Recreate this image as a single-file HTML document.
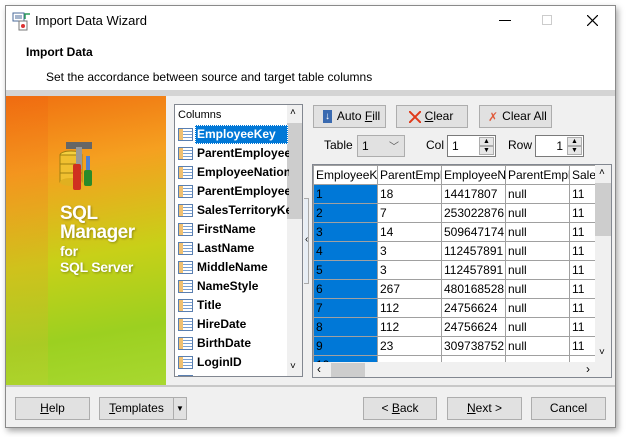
<!DOCTYPE html>
<html><head><style>
*{box-sizing:border-box;margin:0;padding:0}
body{width:626px;height:437px;background:#fff;position:relative;overflow:hidden;font-family:"Liberation Sans",sans-serif;font-size:12px;color:#000}
.a{position:absolute}
.win{left:5px;top:5px;width:611px;height:423px;border:1px solid #8a8a8a;background:#f0f0f0;box-shadow:2px 3px 6px rgba(0,0,0,.35)}
.btn{position:absolute;background:#e1e1e1;border:1px solid #adadad;text-align:center;font-size:12px}
.li{position:absolute;left:3px;height:19px;width:120px;font-size:12px;font-weight:bold;line-height:19px}
.ic{position:absolute;left:0;top:3px;width:15px;height:13px;border:1px solid #5a7fb0;background:repeating-linear-gradient(#fff 0 2px,#7aa0d0 2px 3px);}
.ic:before{content:"";position:absolute;left:0;top:0;width:4px;height:11px;background:#f0c070}
.txt{position:absolute;left:19px;top:0;white-space:nowrap;overflow:hidden;width:92px}
table{border-collapse:collapse;position:absolute;left:0;top:0}
td{border:1px solid #a0a0a0;height:19px;padding:0 2px;font-size:12px;white-space:nowrap;overflow:hidden;background:#fff}
td.k{background:#0078d7;color:#000}
.spin{position:absolute;background:#fff;border:1px solid #7a7a7a;height:22px}
.sb{position:absolute;right:1px;width:15px;height:9px;border:1px solid #adadad;background:#e6e6e6;font-size:7px;line-height:7px;text-align:center}
</style></head><body>
<div class="a win"></div>
<div class="a" style="left:6px;top:6px;width:609px;height:84px;background:#fff"></div>
<svg class="a" style="left:12px;top:11px" width="20" height="20"><rect x="1" y="2" width="11" height="8" fill="#fff" stroke="#4a6a9a"/><line x1="3" y1="5" x2="10" y2="5" stroke="#4a6a9a"/><line x1="3" y1="7" x2="10" y2="7" stroke="#4a6a9a"/><rect x="7" y="10" width="8" height="9" fill="#fff" stroke="#777"/><circle cx="11" cy="15" r="2" fill="#d33"/><path d="M13 8 L13 3 L18 3" stroke="#2a9a5a" fill="none" stroke-width="1.5"/></svg>
<div class="a" style="left:35px;top:13px;font-size:13px">Import Data Wizard</div>
<div class="a" style="left:499px;top:20px;width:12px;height:1px;background:#000"></div>
<div class="a" style="left:542px;top:15px;width:10px;height:10px;border:1px solid #ccc"></div>
<svg class="a" style="left:587px;top:15px" width="11" height="11"><path d="M0 0L11 11M11 0L0 11" stroke="#000" stroke-width="1.2"/></svg>
<div class="a" style="left:26px;top:45px;font-weight:bold;font-size:12px">Import Data</div>
<div class="a" style="left:46px;top:70px;font-size:12px">Set the accordance between source and target table columns</div>
<div class="a" style="left:6px;top:90px;width:609px;height:6px;background:#d4d4d4"></div>
<div class="a" style="left:6px;top:96px;width:160px;height:289px;background:linear-gradient(170deg,#f07010 0%,#f5a020 25%,#c8d018 55%,#9cd020 80%,#a8d830 100%)"></div>
<div class="a" style="left:6px;top:96px;width:42px;height:289px;background:linear-gradient(#f06010,#f08a20 40%,#c0d030);opacity:.3"></div>
<svg class="a" style="left:58px;top:138px" width="42" height="54"><ellipse cx="13" cy="17" rx="11" ry="4" fill="#f5d040" stroke="#a08010"/><rect x="2" y="17" width="22" height="27" fill="#f0c030" stroke="#a08010"/><line x1="2" y1="26" x2="24" y2="26" stroke="#a08010"/><line x1="2" y1="35" x2="24" y2="35" stroke="#a08010"/><ellipse cx="13" cy="44" rx="11" ry="4" fill="#e0b020"/><rect x="8" y="4" width="26" height="7" fill="#666"/><rect x="18" y="9" width="6" height="22" fill="#999"/><rect x="15" y="26" width="8" height="26" rx="2" fill="#d03020"/><rect x="28" y="18" width="4" height="16" fill="#5080d0"/><rect x="26" y="32" width="8" height="16" rx="2" fill="#2a8a2a"/></svg>
<div class="a" style="left:60px;top:204px;color:#fff;font-weight:bold;font-size:19px;line-height:19px;letter-spacing:-.5px;text-shadow:1px 1px 2px rgba(0,0,0,.3)">SQL<br>Manager</div>
<div class="a" style="left:60px;top:243px;color:#fff;font-weight:bold;font-size:14px;line-height:16px;letter-spacing:-.3px;text-shadow:1px 1px 2px rgba(0,0,0,.3)">for<br>SQL Server</div>
<div class="a" style="left:174px;top:104px;width:129px;height:273px;border:1px solid #828790;background:#fff;overflow:hidden">
<div class="a" style="left:3px;top:4px;font-size:11px">Columns</div>
<div class="a" style="left:112px;top:0;width:16px;height:272px;background:#f0f0f0"></div>
<div class="a" style="left:112px;top:18px;width:16px;height:96px;background:#cdcdcd"></div>
<div class="a" style="left:115px;top:2px;font-size:10px">˄</div>
<div class="a" style="left:115px;top:256px;font-size:10px">˅</div>
<div class="a" style="left:20px;top:20px;width:93px;height:19px;background:#0078d7;border:1px dotted #fff"></div>
<div class="li" style="top:20px"><div class="ic"></div><div class="txt" style="color:#fff">EmployeeKey</div></div>
<div class="li" style="top:39px"><div class="ic"></div><div class="txt">ParentEmployeeKey</div></div>
<div class="li" style="top:58px"><div class="ic"></div><div class="txt">EmployeeNationalID</div></div>
<div class="li" style="top:77px"><div class="ic"></div><div class="txt">ParentEmployeeNat</div></div>
<div class="li" style="top:96px"><div class="ic"></div><div class="txt">SalesTerritoryKey</div></div>
<div class="li" style="top:115px"><div class="ic"></div><div class="txt">FirstName</div></div>
<div class="li" style="top:134px"><div class="ic"></div><div class="txt">LastName</div></div>
<div class="li" style="top:153px"><div class="ic"></div><div class="txt">MiddleName</div></div>
<div class="li" style="top:172px"><div class="ic"></div><div class="txt">NameStyle</div></div>
<div class="li" style="top:191px"><div class="ic"></div><div class="txt">Title</div></div>
<div class="li" style="top:210px"><div class="ic"></div><div class="txt">HireDate</div></div>
<div class="li" style="top:229px"><div class="ic"></div><div class="txt">BirthDate</div></div>
<div class="li" style="top:248px"><div class="ic"></div><div class="txt">LoginID</div></div>
<div class="li" style="top:267px"><div class="ic"></div></div>
</div>
<div class="a" style="left:304px;top:198px;width:5px;height:86px;border:1px solid #aaa;border-left:none;background:#e8eef5"></div>
<div class="a" style="left:305px;top:234px;font-size:10px">‹</div>
<div class="btn" style="left:313px;top:105px;width:73px;height:23px;line-height:21px;padding-left:18px"><span style="position:absolute;left:9px;top:4px;width:9px;height:13px;background:#3a6ab0;color:#fff;font-size:10px;line-height:13px">↓</span>Auto <u>F</u>ill</div>
<div class="btn" style="left:396px;top:105px;width:72px;height:23px;line-height:21px;padding-left:14px"><svg style="position:absolute;left:12px;top:5px" width="12" height="12"><path d="M0 0L12 12M12 0L0 12" stroke="#e03a1a" stroke-width="2"/></svg><u>C</u>lear</div>
<div class="btn" style="left:479px;top:105px;width:73px;height:23px;line-height:21px;padding-left:18px"><span style="position:absolute;left:8px;top:1px;color:#e05a3a;font-size:12px">✗</span>Clear All</div>
<div class="a" style="left:324px;top:138px">Table</div>
<div class="a" style="left:357px;top:135px;width:48px;height:22px;border:1px solid #adadad;background:#e1e1e1;padding:3px 4px">1<span style="position:absolute;right:5px;top:2px;font-size:10px;color:#555">﹀</span></div>
<div class="a" style="left:426px;top:138px">Col</div>
<div class="spin" style="left:447px;top:135px;width:49px"><span style="position:absolute;left:4px;top:3px">1</span><div class="sb" style="top:1px">▲</div><div class="sb" style="top:10px">▼</div></div>
<div class="a" style="left:508px;top:138px">Row</div>
<div class="spin" style="left:535px;top:135px;width:49px"><span style="position:absolute;right:20px;top:3px">1</span><div class="sb" style="top:1px">▲</div><div class="sb" style="top:10px">▼</div></div>
<div class="a" style="left:312px;top:164px;width:300px;height:214px;border:1px solid #828790;background:#fff;overflow:hidden">
<table style="table-layout:fixed;width:300px">
<colgroup><col style="width:64px"><col style="width:64px"><col style="width:64px"><col style="width:64px"><col style="width:44px"></colgroup>
<tr><td>EmployeeKe</td><td>ParentEmplo</td><td>EmployeeNa</td><td>ParentEmplo</td><td>Sales</td></tr>
<tr><td class="k">1</td><td>18</td><td>14417807</td><td>null</td><td>11</td></tr>
<tr><td class="k">2</td><td>7</td><td>253022876</td><td>null</td><td>11</td></tr>
<tr><td class="k">3</td><td>14</td><td>509647174</td><td>null</td><td>11</td></tr>
<tr><td class="k">4</td><td>3</td><td>112457891</td><td>null</td><td>11</td></tr>
<tr><td class="k">5</td><td>3</td><td>112457891</td><td>null</td><td>11</td></tr>
<tr><td class="k">6</td><td>267</td><td>480168528</td><td>null</td><td>11</td></tr>
<tr><td class="k">7</td><td>112</td><td>24756624</td><td>null</td><td>11</td></tr>
<tr><td class="k">8</td><td>112</td><td>24756624</td><td>null</td><td>11</td></tr>
<tr><td class="k">9</td><td>23</td><td>309738752</td><td>null</td><td>11</td></tr>
<tr><td class="k">10</td><td></td><td></td><td></td><td></td></tr>
</table>
<div class="a" style="left:282px;top:0;width:17px;height:197px;background:#f0f0f0"></div>
<div class="a" style="left:282px;top:18px;width:17px;height:53px;background:#cdcdcd"></div>
<div class="a" style="left:286px;top:2px;font-size:10px">˄</div>
<div class="a" style="left:286px;top:182px;font-size:10px">˅</div>
<div class="a" style="left:0;top:197px;width:299px;height:16px;background:#f0f0f0"></div>
<div class="a" style="left:18px;top:198px;width:34px;height:15px;background:#cdcdcd"></div>
<div class="a" style="left:4px;top:197px;font-size:12px">‹</div>
<div class="a" style="left:273px;top:197px;font-size:12px">›</div>
</div>
<div class="a" style="left:6px;top:385px;width:609px;height:2px;background:#c8c8c8"></div>
<div class="btn" style="left:15px;top:397px;width:75px;height:23px;line-height:21px"><u>H</u>elp</div>
<div class="btn" style="left:99px;top:397px;width:75px;height:23px;line-height:21px"><u>T</u>emplates</div>
<div class="btn" style="left:173px;top:397px;width:14px;height:23px;line-height:21px;font-size:8px">▼</div>
<div class="btn" style="left:363px;top:397px;width:74px;height:23px;line-height:21px">&lt; <u>B</u>ack</div>
<div class="btn" style="left:447px;top:397px;width:75px;height:23px;line-height:21px"><u>N</u>ext &gt;</div>
<div class="btn" style="left:531px;top:397px;width:75px;height:23px;line-height:21px">Cancel</div>
</body></html>
